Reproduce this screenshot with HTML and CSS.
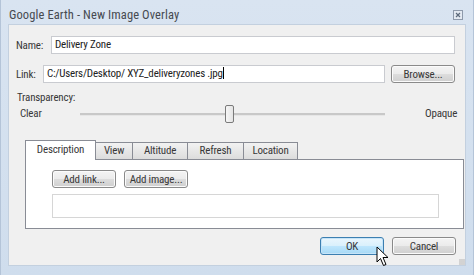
FILE: index.html
```html
<!DOCTYPE html>
<html lang="en">

<head>
    <link rel="stylesheet" href="styles.css">
</head>

<body>
    <div class="window">
        <div class="titlebar">
            <span class="title">Google Earth - New Image Overlay</span>
            <span class="close-btn">
                <svg width="10" height="10" viewBox="0 0 10 10">
                    <rect x="0.5" y="0.5" width="9" height="9" fill="#e4eaf2" stroke="#8e9aab"/>
                    <path d="M3 3 L7 7 M7 3 L3 7" stroke="#5d6a7c" stroke-width="1.2"/>
                </svg>
            </span>
        </div>
        <div class="content">
            <div class="row name-row">
                <label class="label">Name:</label>
                <div class="field name-field">Delivery Zone</div>
            </div>
            <div class="row link-row">
                <label class="label">Link:</label>
                <div class="field link-field">C:/Users/Desktop/ XYZ_deliveryzones .jpg<span class="caret"></span></div>
                <button class="btn browse">Browse...</button>
            </div>
            <div class="trans-label">Transparency:</div>
            <div class="slider-row">
                <span class="end-label clear">Clear</span>
                <div class="track">
                    <span class="thumb"></span>
                </div>
                <span class="end-label opaque">Opaque</span>
            </div>
            <div class="tabs">
                <span class="tab active">Description</span>
                <span class="tab view">View</span>
                <span class="tab altitude">Altitude</span>
                <span class="tab refresh">Refresh</span>
                <span class="tab location">Location</span>
            </div>
            <div class="panel">
                <div class="panel-buttons">
                    <button class="btn add-link">Add link...</button>
                    <button class="btn add-image">Add image...</button>
                </div>
                <div class="desc-box"></div>
            </div>
            <div class="footer">
                <button class="btn ok">OK</button>
                <button class="btn cancel">Cancel</button>
                <svg class="cursor" width="14" height="21" viewBox="0 0 14 21">
                    <path d="M1 1 L1 16 L4.5 12.5 L7.5 19.5 L10 18.5 L7 11.5 L12 11.5 Z" fill="#fff" stroke="#000" stroke-width="1" stroke-linejoin="round"/>
                </svg>
                <span class="grip"></span>
            </div>
        </div>
    </div>
</body>

</html>
```

FILE: styles.css
```css
body {
    margin: 0;
    padding: 0;
    font-family: "Roboto Condensed", "Roboto", sans-serif;
    font-stretch: condensed;
    font-size: 11px;
    letter-spacing: -0.2px;
    color: #383838;
}

.window {
    width: 474px;
    height: 275px;
    box-sizing: border-box;
    background: linear-gradient(#d9e4f1, #cfdded);
    padding: 0 7px 9px 7px;
    display: flex;
    flex-direction: column;
    border-left: 1px solid #b4c4d8;
    border-right: 1px solid #b4c4d8;
}

.titlebar {
    height: 24px;
    display: flex;
    align-items: center;
    justify-content: space-between;
    flex-shrink: 0;
}

.title {
    font-size: 12.5px;
    letter-spacing: 0.1px;
    color: #464a50;
    margin-left: 1px;
    margin-top: 5px;
}

.close-btn {
    display: flex;
    margin-right: 3px;
    margin-top: 6px;
}

.content {
    flex: 1;
    background: #f0f0f0;
    border: 1px solid #c3d0df;
    padding: 11px 10px 0 6px;
    position: relative;
    display: flex;
    flex-direction: column;
}

.row {
    display: flex;
    align-items: center;
    height: 18px;
}

.label {
    width: 35px;
    padding-left: 1px;
}

.link-row {
    margin-top: 11px;
}

.link-row .label {
    width: 27px;
}

.field {
    height: 18px;
    box-sizing: border-box;
    background: #fff;
    border: 1px solid #c9cbd0;
    padding: 0 3px;
    line-height: 16px;
    color: #222;
    white-space: nowrap;
}

.name-field {
    flex: 1;
}

.link-field {
    width: 343px;
}

.caret {
    display: inline-block;
    width: 1px;
    height: 12px;
    background: #000;
    vertical-align: -2px;
}

.btn {
    font-family: inherit;
    font-stretch: inherit;
    font-size: 11px;
    letter-spacing: inherit;
    color: #383838;
    height: 18px;
    width: 64px;
    padding: 0;
    white-space: nowrap;
    border: 1px solid #8a8a8a;
    border-radius: 3px;
    background: linear-gradient(#f4f4f4 0%, #ebebeb 50%, #dddddd 51%, #cfcfcf 100%);
    box-shadow: inset 0 0 0 1px #fbfbfb;
}

.browse {
    margin-left: 6px;
}

.trans-label {
    margin-top: 8px;
    padding-left: 2px;
    height: 14px;
    line-height: 14px;
}

.slider-row {
    display: flex;
    align-items: center;
    height: 18px;
}

.end-label {
    line-height: 12px;
    flex-shrink: 0;
}

.clear {
    width: 60px;
    padding-left: 5px;
}

.track {
    flex: 0 0 305px;
    height: 2px;
    background: #c8c8c8;
    border-bottom: 1px solid #e6e6e6;
    position: relative;
}

.thumb {
    position: absolute;
    left: 145px;
    top: -8px;
    width: 7px;
    height: 16px;
    border: 1px solid #7a7a7a;
    border-radius: 2px;
    background: linear-gradient(to right, #f6f6f6, #e4e4e4);
}

.opaque {
    margin-left: 40px;
}

.tabs {
    display: flex;
    align-items: flex-end;
    margin-top: 17px;
    margin-left: 10px;
    height: 19px;
}

.tab {
    height: 17px;
    box-sizing: border-box;
    border: 1px solid #898c95;
    border-bottom: none;
    border-left: none;
    background: linear-gradient(#f2f2f2, #dcdcdc);
    text-align: center;
    line-height: 16px;
}

.tab.active {
    height: 20px;
    width: 71px;
    background: #fff;
    border-left: 1px solid #898c95;
    position: relative;
    top: 1px;
    line-height: 18px;
}

.view {
    width: 37px;
}

.altitude {
    width: 55px;
}

.refresh {
    width: 56px;
}

.location {
    width: 54px;
}

.panel {
    margin-left: 10px;
    width: 439px;
    height: 70px;
    box-sizing: border-box;
    background: #fff;
    border: 1px solid #898c95;
    padding: 10px 0 0 26px;
}

.panel-buttons {
    display: flex;
    gap: 8px;
}

.desc-box {
    margin-top: 6px;
    width: 387px;
    height: 24px;
    box-sizing: border-box;
    border: 1px solid #d6d6d6;
}

.footer {
    display: flex;
    justify-content: flex-end;
    gap: 8px;
    margin-top: 8px;
    margin-right: -1px;
    position: relative;
}

.ok {
    border-color: #3c7fb1;
    background: linear-gradient(#eaf6fd 0%, #d9f0fc 50%, #bee6fd 51%, #a7d9f5 100%);
    box-shadow: inset 0 0 0 1px #c6e4f8;
}

.cursor {
    position: absolute;
    right: 66px;
    top: 9px;
}

.grip {
    position: absolute;
    right: -9px;
    top: 22px;
    width: 6px;
    height: 6px;
    background: radial-gradient(circle, #b0b0b0 0.6px, transparent 0.8px) 0 0 / 2px 2px;
}
```
